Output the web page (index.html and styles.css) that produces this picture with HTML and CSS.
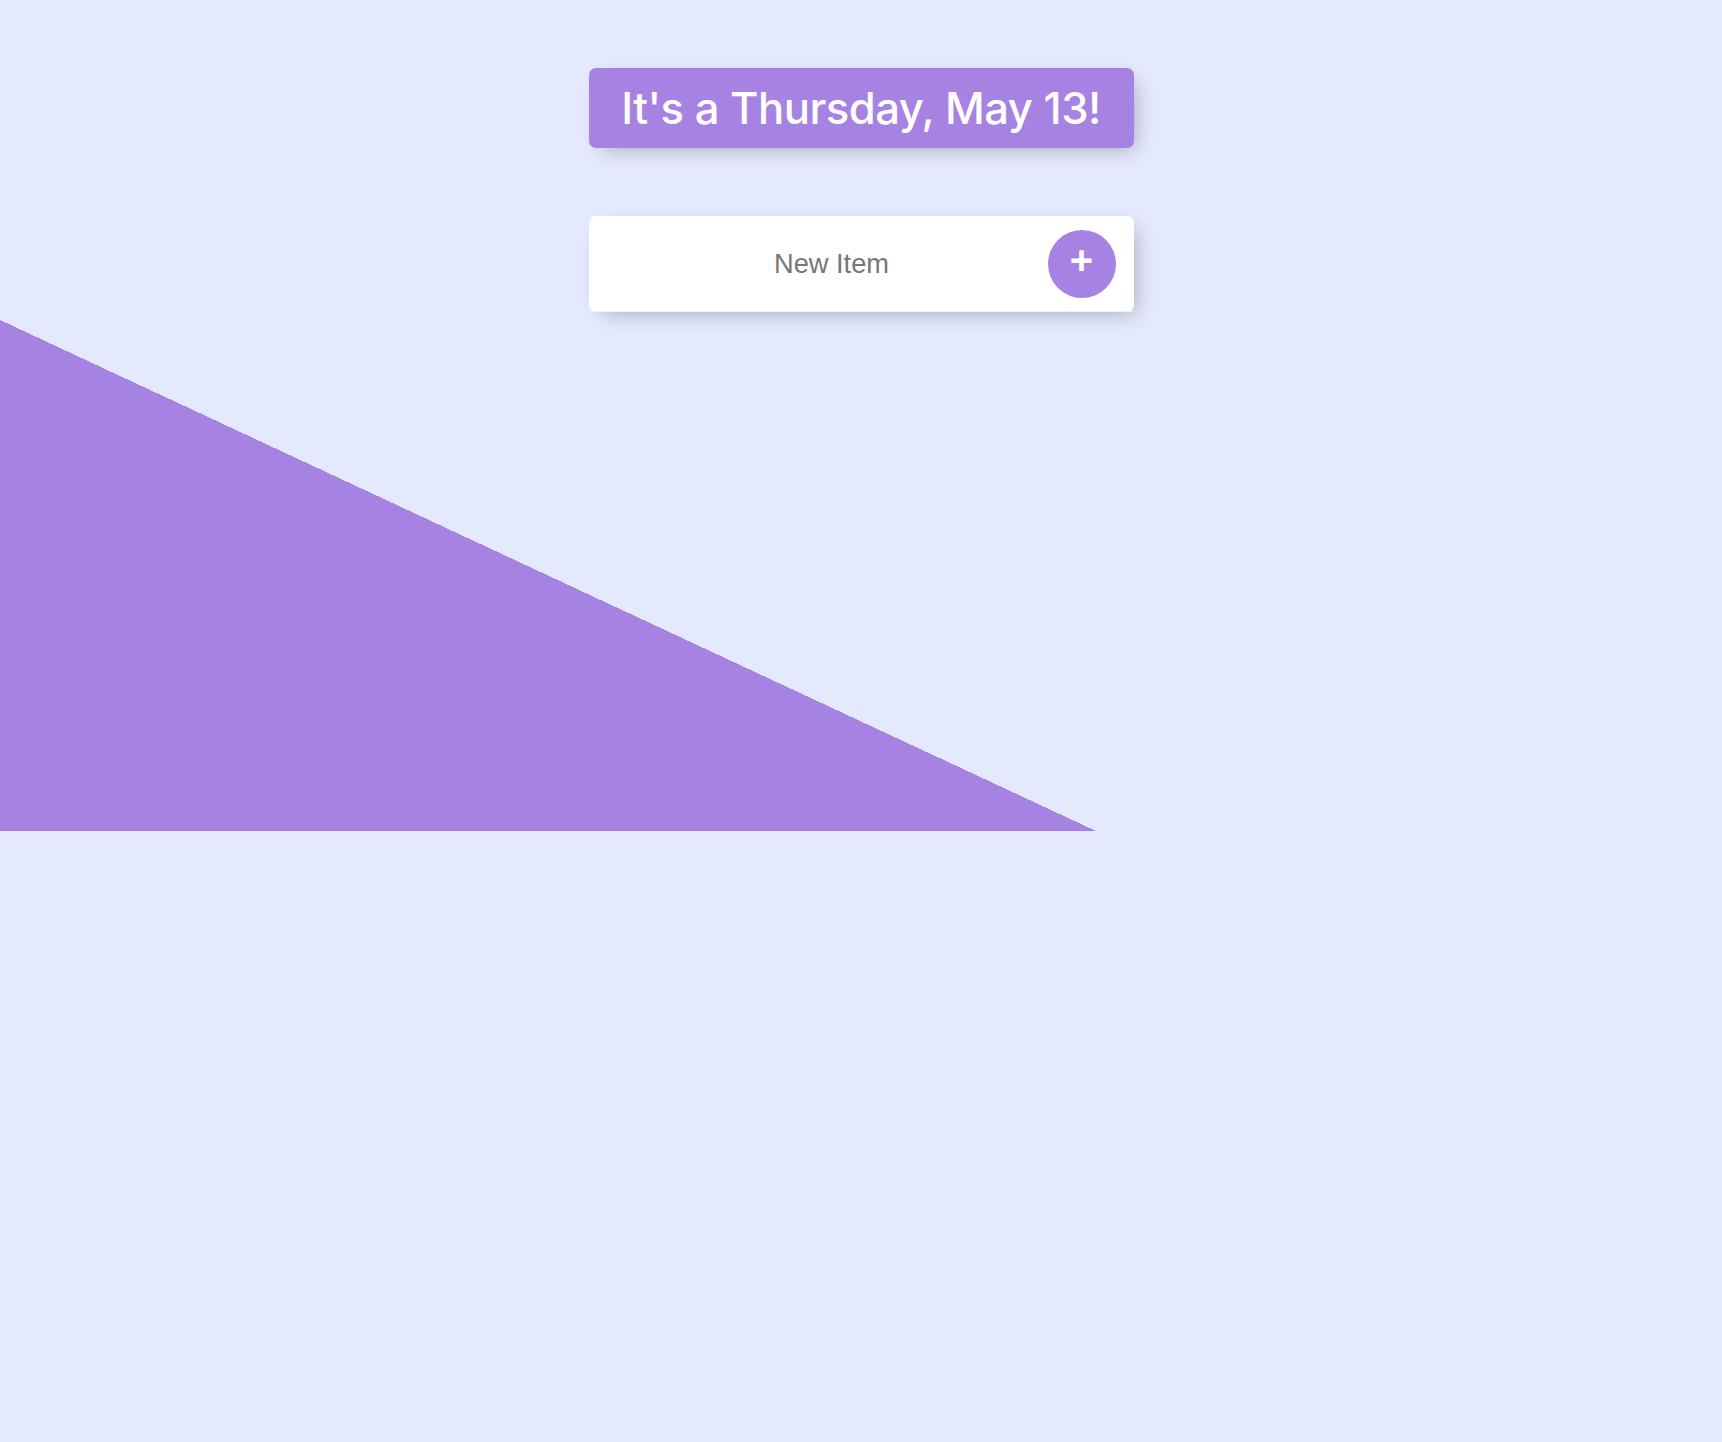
FILE: index.html
```html
<!DOCTYPE html>
<html lang="en">
<head>
<meta charset="utf-8">
<title>To Do List</title>
<link rel="stylesheet" href="styles.css">
</head>
<body>
  <div class="box heading">
    <h1 class="heading-title">It's a Thursday, May 13!</h1>
  </div>
  <div class="box">
    <form class="item" action="/" method="post">
      <input class="new-item" type="text" name="newItem" placeholder="New Item" autocomplete="off">
      <button class="add-btn" type="submit" name="list">+</button>
    </form>
  </div>
</body>
</html>
```
FILE: styles.css
```css
html {
  background-color: #E4E9FD;
  background-image: linear-gradient(to top right, #A683E3 50%, rgba(228, 233, 253, 0) 50%);
  background-size: 1096px 511px;
  background-position: 0 320px;
  background-repeat: no-repeat;
  min-height: 1442px;
}

body {
  margin: 0;
  padding: 68px 0 0;
  font-family: "Liberation Sans", Arial, sans-serif;
}

.box {
  width: 545px;
  margin: 0 auto 68px;
  background: #ffffff;
  border-radius: 7px;
  box-shadow: 7px 7px 20px -7px rgba(0, 0, 0, 0.3);
}

.heading {
  background-color: #A683E3;
  text-align: center;
}

.heading-title {
  margin: 0;
  padding: 13.6px;
  color: #ffffff;
  font-family: "Inter", "Open Sans", sans-serif;
  font-weight: 500;
  font-size: 43.6px;
  line-height: 53px;
  letter-spacing: -0.5px;
}

.item {
  display: flex;
  align-items: center;
  min-height: 96px;
  border-bottom: 1px solid #F1F1F1;
  padding-left: 29px;
  box-sizing: border-box;
}

.new-item {
  width: 430px;
  height: 82px;
  padding: 1px 3px 1px 1px;
  box-sizing: border-box;
  border: none;
  background: transparent;
  text-align: center;
  font-family: "Liberation Sans", Arial, sans-serif;
  font-size: 27.25px;
  font-weight: 200;
  outline: none;
}

.new-item::placeholder {
  color: #777777;
}

.add-btn {
  width: 68px;
  height: 68px;
  padding: 0 0 8px;
  border: 0;
  border-radius: 50%;
  background-color: #A683E3;
  color: #ffffff;
  font-family: "Liberation Sans", Arial, sans-serif;
  font-size: 40px;
  font-weight: 700;
  line-height: 1;
  cursor: pointer;
}
```
